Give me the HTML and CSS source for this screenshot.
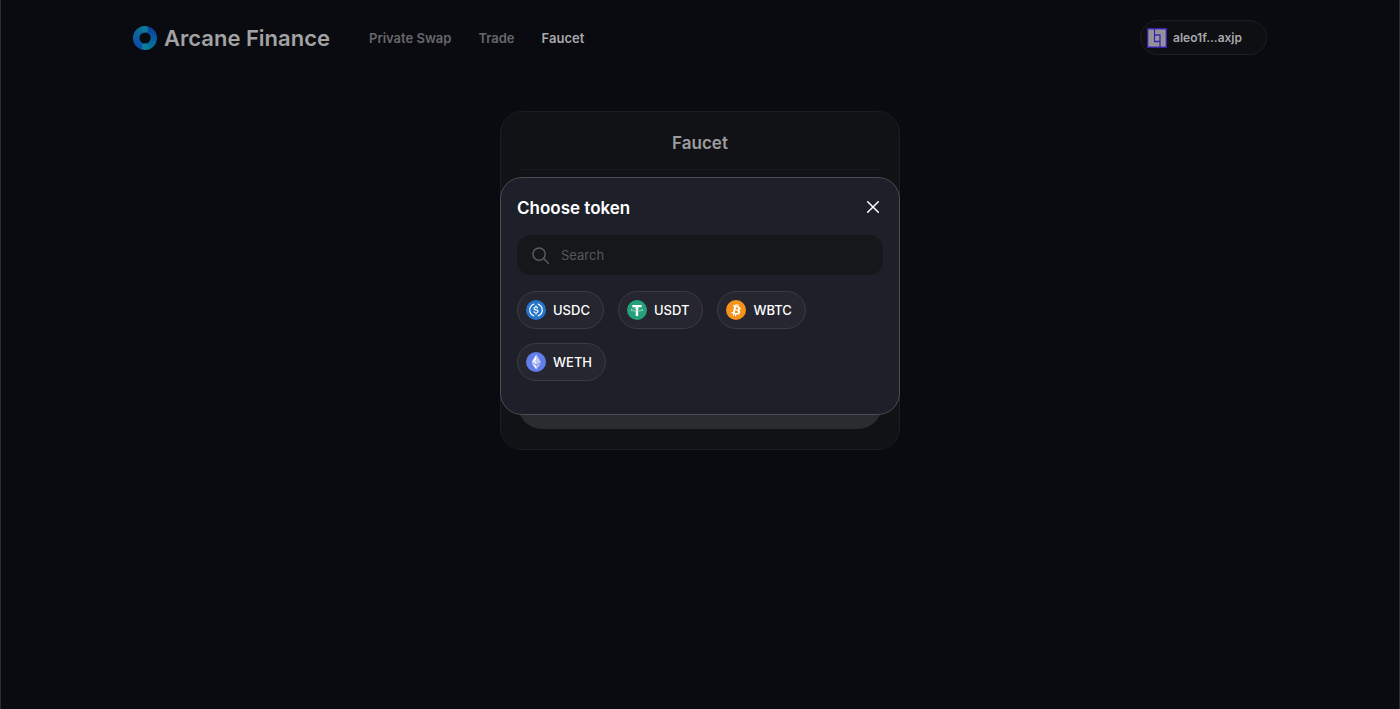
FILE: index.html
```html
<!DOCTYPE html>
<html lang="en">
<head>
<meta charset="utf-8">
<meta name="viewport" content="width=device-width, initial-scale=1">
<title>Arcane Finance</title>
<link rel="stylesheet" href="styles.css">
</head>
<body>
<header class="header">
  <a class="brand" href="#">
    <svg class="brand-logo" viewBox="0 0 24 24" aria-hidden="true">
      <defs>
        <linearGradient id="ring-left" gradientUnits="userSpaceOnUse" x1="12" y1="0" x2="6" y2="24"><stop offset="0" stop-color="#0a7a96"/><stop offset="1" stop-color="#0d45ac"/></linearGradient>
        <linearGradient id="ring-right" gradientUnits="userSpaceOnUse" x1="16" y1="0" x2="12" y2="24"><stop offset="0" stop-color="#0c3aa0"/><stop offset="1" stop-color="#087e9c"/></linearGradient>
      </defs>
      <g fill="none" stroke-width="6.400">
        <path stroke="url(#ring-left)" d="M12 20.800A8.800 8.800 0 0 1 12 3.200"/>
        <path stroke="url(#ring-right)" d="M12 3.200A8.800 8.800 0 0 1 12 20.800"/>
      </g>
      <circle cx="12" cy="3.200" r="3.200" fill="#0a7a96"/>
      <circle cx="12" cy="20.800" r="3.200" fill="#087e9c"/>
    </svg>
    <span>Arcane Finance</span>
  </a>
  <nav class="nav">
    <a href="#">Private Swap</a>
    <a href="#">Trade</a>
    <a class="active" href="#" aria-current="page">Faucet</a>
  </nav>
  <button class="account" type="button">
    <svg class="avatar" viewBox="0 0 20 20" aria-hidden="true">
      <path fill="#98989c" stroke="#3a20b0" stroke-width="1.400" d="M.7.7h18.600v18.600H.7z"/>
      <path fill="none" stroke="#807f8c" stroke-width=".6" d="M4 1.500v14.500h6.500v3M10.500 1.500V4H16v15"/>
      <path fill="none" stroke="#3a20b0" stroke-width="1.300" d="M7.500 1v12.500h5.500M7.500 7H13v12"/>
    </svg>
    <span>aleo1f...axjp</span>
  </button>
</header>

<main class="page">
  <section class="card">
    <h1 class="card-title">Faucet</h1>
    <button class="card-action" type="button" aria-label="Request tokens"></button>
  </section>
</main>

<div class="overlay">
  <section class="modal" role="dialog" aria-modal="true" aria-labelledby="modal-title">
    <div class="modal-head">
      <h2 id="modal-title">Choose token</h2>
      <button class="close" type="button" aria-label="Close">
        <svg viewBox="0 0 12 12" aria-hidden="true"><path d="M.7.7l10.600 10.600M11.300.7L.7 11.300"/></svg>
      </button>
    </div>
    <label class="search">
      <svg viewBox="0 0 18 18" aria-hidden="true"><circle cx="7.500" cy="7.500" r="6.500"/><path d="M12.300 12.300l5 5"/></svg>
      <input type="text" placeholder="Search" aria-label="Search">
    </label>
    <div class="tokens">
      <button class="token" type="button">
        <svg viewBox="0 0 32 32" aria-hidden="true">
          <circle cx="16" cy="16" r="16" fill="#2775ca"/>
          <path fill="#fff" d="M20.022 18.124c0-2.124-1.280-2.852-3.840-3.156-1.828-.243-2.193-.728-2.193-1.578 0-.850.610-1.396 1.828-1.396 1.097 0 1.707.364 2.011 1.275a.458.458 0 0 0 .427.303h.975a.416.416 0 0 0 .427-.425v-.060a3.040 3.040 0 0 0-2.743-2.489V9.142c0-.243-.183-.425-.487-.486h-.915c-.243 0-.426.182-.487.486v1.396c-1.829.242-2.986 1.456-2.986 2.974 0 2.002 1.218 2.791 3.778 3.095 1.707.303 2.255.668 2.255 1.639 0 .970-.853 1.638-2.011 1.638-1.585 0-2.133-.667-2.316-1.578-.060-.242-.244-.364-.427-.364h-1.036a.416.416 0 0 0-.426.425v.060c.243 1.518 1.219 2.610 3.230 2.914v1.457c0 .242.183.425.487.485h.915c.243 0 .426-.182.487-.485V21.340c1.829-.303 3.047-1.578 3.047-3.217z"/>
          <path fill="#fff" d="M12.892 24.497c-4.754-1.700-7.192-6.980-5.424-11.653.914-2.550 2.925-4.491 5.424-5.402.244-.121.365-.303.365-.607v-.850c0-.242-.121-.424-.365-.485-.061 0-.183 0-.244.060a10.895 10.895 0 0 0-7.130 13.717c1.096 3.400 3.717 6.010 7.130 7.102.244.121.488 0 .548-.243.061-.060.061-.122.061-.243v-.850c0-.182-.182-.424-.365-.546zm6.460-18.936c-.244-.122-.488 0-.548.242-.061.061-.061.122-.061.243v.850c0 .243.182.485.365.607 4.754 1.700 7.192 6.980 5.424 11.653-.914 2.550-2.925 4.491-5.424 5.402-.244.121-.365.303-.365.607v.850c0 .242.121.424.365.485.061 0 .183 0 .244-.060a10.895 10.895 0 0 0 7.130-13.717c-1.096-3.460-3.778-6.070-7.130-7.162z"/>
        </svg>
        <span>USDC</span>
      </button>
      <button class="token" type="button">
        <svg viewBox="0 0 32 32" aria-hidden="true">
          <circle cx="16" cy="16" r="16" fill="#26a17b"/>
          <path fill="#fff" d="M17.922 17.383v-.002c-.110.008-.677.042-1.942.042-1.010 0-1.721-.030-1.971-.042v.003c-3.888-.171-6.790-.848-6.790-1.658 0-.809 2.902-1.486 6.790-1.660v2.644c.254.018.982.061 1.988.061 1.207 0 1.812-.050 1.925-.060v-2.643c3.880.173 6.775.850 6.775 1.658 0 .810-2.895 1.485-6.775 1.657m0-3.590v-2.366h5.414V7.819H8.595v3.608h5.414v2.365c-4.400.202-7.709 1.074-7.709 2.118 0 1.044 3.309 1.915 7.709 2.118v7.582h3.913v-7.584c4.393-.202 7.694-1.073 7.694-2.116 0-1.043-3.301-1.914-7.694-2.117"/>
        </svg>
        <span>USDT</span>
      </button>
      <button class="token" type="button">
        <svg viewBox="0 0 32 32" aria-hidden="true">
          <circle cx="16" cy="16" r="16" fill="#f7931a"/>
          <path fill="#fff" d="M23.189 14.020c.314-2.096-1.283-3.223-3.465-3.975l.708-2.840-1.728-.430-.690 2.765c-.454-.114-.920-.220-1.385-.326l.695-2.783L15.596 6l-.708 2.839c-.376-.086-.746-.170-1.104-.260l.002-.009-2.384-.595-.460 1.846s1.283.294 1.256.312c.700.175.826.638.805 1.006l-.806 3.235c.048.012.110.030.180.057l-.183-.045-1.130 4.532c-.086.212-.303.531-.793.410.018.025-1.256-.313-1.256-.313l-.858 1.978 2.250.561c.418.105.828.215 1.231.318l-.715 2.872 1.727.430.708-2.840c.472.127.930.245 1.378.357l-.706 2.828 1.728.430.715-2.866c2.948.558 5.164.333 6.097-2.333.752-2.146-.037-3.385-1.588-4.192 1.130-.260 1.980-1.003 2.207-2.538zm-3.950 5.538c-.533 2.147-4.148.986-5.320.695l.950-3.805c1.172.293 4.929.872 4.370 3.110zm.535-5.569c-.487 1.953-3.495.960-4.470.717l.860-3.450c.975.243 4.118.696 3.610 2.733z"/>
        </svg>
        <span>WBTC</span>
      </button>
      <button class="token" type="button">
        <svg viewBox="0 0 32 32" aria-hidden="true">
          <circle cx="16" cy="16" r="16" fill="#627eea"/>
          <path fill="#fff" fill-opacity=".6" d="M16.498 4v8.870l7.497 3.350zM16.498 21.968v6.027L24 17.616zM16.498 20.573l7.497-4.353-7.497-3.348z"/>
          <path fill="#fff" d="M16.498 4L9 16.220l7.498-3.350zM16.498 27.995v-6.028L9 17.616z"/>
          <path fill="#fff" fill-opacity=".8" d="M9 16.220l7.498 4.353v-7.701z"/>
        </svg>
        <span>WETH</span>
      </button>
    </div>
  </section>
</div>
</body>
</html>
```
FILE: styles.css
```css
* {
  box-sizing: border-box;
}

body {
  margin: 0;
  min-height: 100vh;
  background: #0a0b10;
  border: solid #2b2c30;
  border-width: 0 1px;
  color: #fff;
  font-family: Inter, "Liberation Sans", sans-serif;
  font-size: 13px;
}

button {
  font: inherit;
  color: inherit;
  cursor: pointer;
}

a {
  color: inherit;
  text-decoration: none;
}

h1,
h2 {
  margin: 0;
  font-size: 17px;
  font-weight: 600;
  line-height: 24px;
}

.header {
  display: flex;
  align-items: center;
  max-width: 1134px;
  height: 75px;
  margin: 0 auto;
}

.brand {
  display: flex;
  align-items: center;
  gap: 7px;
  color: #a2a2a3;
  font-size: 22px;
  font-weight: 600;
}

.brand-logo {
  width: 24px;
  height: 24px;
}

.nav {
  display: flex;
  gap: 27px;
  margin-left: 39px;
  color: #66676a;
  font-weight: 600;
}

.nav .active {
  color: #a8a8aa;
}

.account {
  display: flex;
  align-items: center;
  gap: 6px;
  height: 35px;
  margin-left: auto;
  padding: 0 24px 0 6px;
  background: #0e0f13;
  border: 1px solid #1d1e23;
  border-radius: 18px;
  color: #a8a8aa;
  font-size: 12px;
  font-weight: 600;
}

.avatar {
  width: 20px;
  height: 20px;
}

.page {
  padding: 36px 16px;
}

.card {
  display: flex;
  flex-direction: column;
  width: 100%;
  max-width: 400px;
  min-height: 339px;
  margin: 0 auto;
  padding: 0 17px 20px;
  background: #111215;
  border: 1px solid #1c1d24;
  border-radius: 22px;
}

.card-title {
  padding: 19px 0 14px;
  border-bottom: 1px solid #191a21;
  color: #9c9c9d;
  text-align: center;
}

.card-action {
  height: 48px;
  margin-top: auto;
  background: #2b2c2f;
  border: 0;
  border-radius: 24px;
}

.overlay {
  position: fixed;
  inset: 0;
  display: flex;
  align-items: flex-start;
  justify-content: center;
  padding: 177px 16px 16px;
}

.modal {
  width: 100%;
  max-width: 400px;
  padding: 18px 16px 33px;
  background: #1e2029;
  border: 1px solid #4a4b53;
  border-radius: 22px;
}

.modal-head {
  display: flex;
  align-items: center;
  justify-content: space-between;
}

.close {
  display: flex;
  padding: 3px 4px 5px;
  background: none;
  border: 0;
}

.close svg {
  width: 12px;
  height: 12px;
  overflow: visible;
  stroke: #fff;
  stroke-width: 1.5;
  stroke-linecap: round;
}

.search {
  display: flex;
  align-items: center;
  gap: 12px;
  height: 40px;
  margin: 15px 0 16px;
  padding: 0 15px;
  background: #15171a;
  border-radius: 14px;
}

.search svg {
  flex: none;
  width: 17px;
  height: 17px;
  fill: none;
  stroke: #5d5e61;
  stroke-width: 1.5;
  stroke-linecap: round;
}

.search input {
  flex: 1;
  min-width: 0;
  padding: 0;
  background: none;
  border: 0;
  outline: 0;
  color: #fff;
  font: inherit;
}

.search input::placeholder {
  color: #56575a;
  opacity: 1;
}

.tokens {
  display: flex;
  flex-wrap: wrap;
  gap: 14px;
}

.token {
  display: flex;
  align-items: center;
  gap: 7px;
  height: 38px;
  padding: 0 13px 0 8px;
  background: #25262f;
  border: 1px solid #3a3b43;
  border-radius: 19px;
  font-weight: 500;
}

.token svg {
  width: 20px;
  height: 20px;
}
```
